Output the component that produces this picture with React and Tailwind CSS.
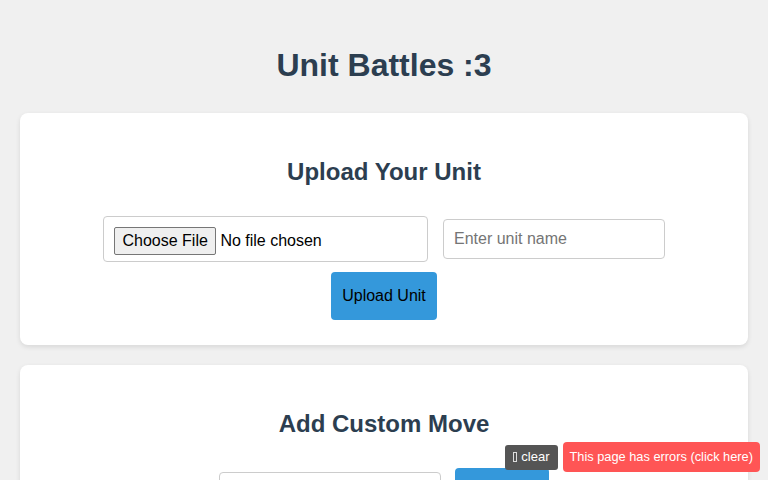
import React from 'react';

const inputCls =
  'h-[40px] w-[222px] px-[10px] border border-[#ccc] rounded-[4px] text-base bg-white text-black placeholder:text-[#757575] outline-none';

const btnCls =
  'h-[48px] px-[11px] rounded-[4px] bg-[#3498db] text-base text-black cursor-pointer';

const App = () => {
  return (
    <div className="h-[480px] overflow-hidden bg-[#f0f0f0] px-[20px] font-['Liberation_Sans',Arial,sans-serif] text-[#2c3e50]">
      <h1 className="pt-[47px] pb-[29px] text-center text-[32px] leading-[37px] font-bold">Unit Battles :3</h1>

      {/* Upload card */}
      <div className="bg-white rounded-[8px] shadow-[0_2px_5px_rgba(0,0,0,0.1)] px-[25px] pt-[45px] pb-[25px]">
        <h2 className="text-center text-2xl leading-[28px] font-bold">Upload Your Unit</h2>
        <div className="mt-[30px] flex justify-center items-center gap-[15px]">
          <input
            type="file"
            className="w-[325px] h-[46px] p-[10px] border border-[#ccc] rounded-[4px] text-base text-black file:mr-[4px] file:px-[7.5px] file:py-[1px] file:border file:border-[#767676] file:rounded-[2px] file:bg-[#efefef] file:text-black"
          />
          <input type="text" placeholder="Enter unit name" className={inputCls} />
        </div>
        <div className="mt-[10px] flex justify-center">
          <button className={btnCls}>Upload Unit</button>
        </div>
      </div>

      {/* Custom move card */}
      <div className="mt-[20px] bg-white rounded-[8px] shadow-[0_2px_5px_rgba(0,0,0,0.1)] px-[25px] pt-[45px] pb-[25px]">
        <h2 className="text-center text-2xl leading-[28px] font-bold">Add Custom Move</h2>
        <div className="mt-[30px] flex justify-center items-center gap-[14px]">
          <input type="text" placeholder="Enter move name" className={inputCls} />
          <button className={btnCls}>Add Move</button>
        </div>
      </div>

      {/* Error overlay */}
      <div className="fixed right-[8px] bottom-[8px] flex items-center gap-[5px] text-[13px] text-white">
        <button className="h-[25px] px-[8px] rounded-[3px] bg-[#555] flex items-center gap-[4px]">
          <span className="inline-block w-[4px] h-[10px] border border-white/80"></span>
          clear
        </button>
        <button className="h-[30px] px-[7px] rounded-[4px] bg-[#f55] text-[12.8px]">This page has errors (click here)</button>
      </div>
    </div>
  );
};

export default App;
